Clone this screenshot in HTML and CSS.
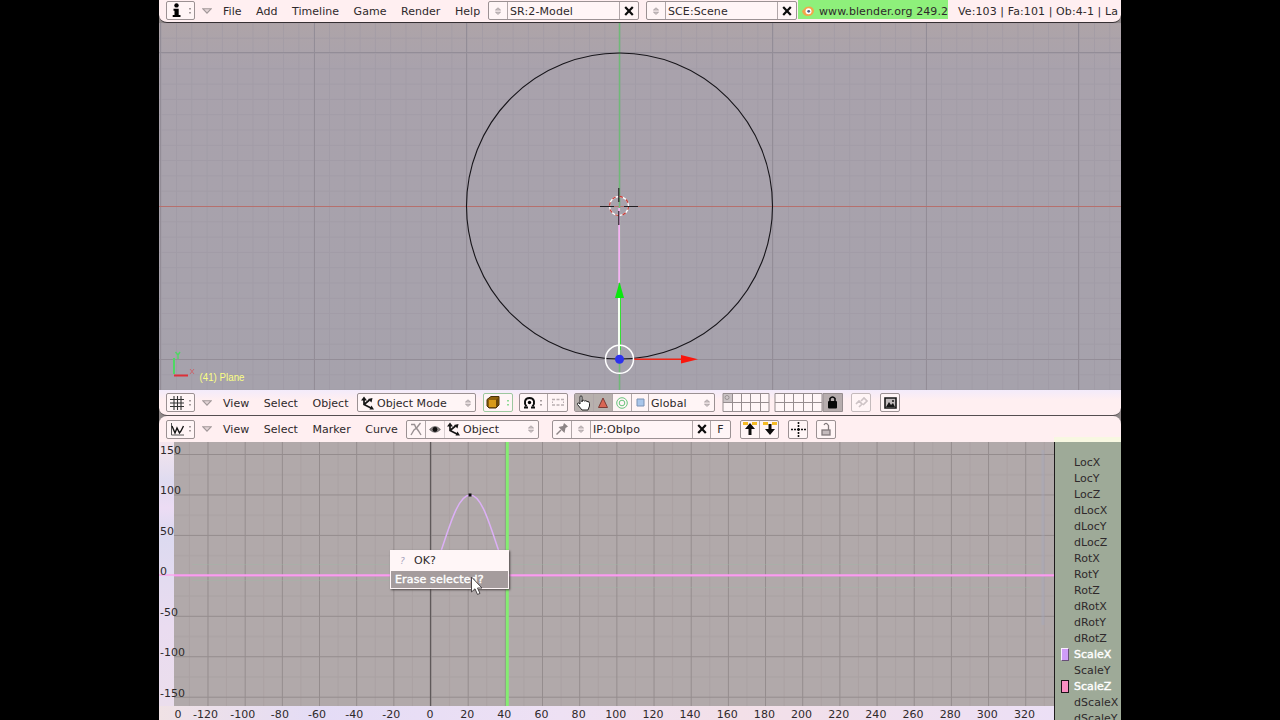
FILE: index.html
```html
<!DOCTYPE html>
<html lang="en">
<head>
    <meta charset="UTF-8">
    <title>Blender</title>
    <link rel="stylesheet" href="styles.css">
</head>
<body>

<svg class="defs" width="0" height="0">
    <symbol id="updown" viewBox="0 0 8 8"><path d="M1.500 3L4 .8L6.500 3ZM1.500 5.200L4 7.400L6.500 5.200Z" fill="#d8cfd1" stroke="#a1989a" stroke-width=".8"/></symbol>
    <symbol id="tri" viewBox="0 0 10 6"><path d="M.8 .7H9.2L5 5.2Z" fill="#e3d4d6" stroke="#a3999b" stroke-width="1.1"/></symbol>
    <symbol id="axes" viewBox="0 0 14 14"><path d="M3 3V8.500L10 12M3 8.500L8.500 4" fill="none" stroke="#151515" stroke-width="1.700"/><path d="M3 .5L6 4.500H0ZM11.500 2L10.500 6.500L7 3ZM13 13.500L8.500 13.500L10.500 9.500Z" fill="#151515"/></symbol>
    <symbol id="cross" viewBox="0 0 10 10"><path d="M1.2 1L8.800 9M8.800 1L1.200 9" stroke="#0c0c0c" stroke-width="2.200"/></symbol>
</svg>

<div class="window">

    <header class="bar top">
        <button class="box type"><svg width="10" height="15" viewBox="0 0 10 15"><circle cx="4.500" cy="2.400" r="2.200"/><path d="M1.500 5.700H6.700V12H8.500V14H.7V12H2.500V7.700H1.500Z"/></svg><svg class="ud" width="5" height="8"><path d="M1 1h2v1.500h-2zM1 5h2v1.500h-2z" fill="#a59c9d"/></svg></button>
        <svg class="tri" width="10" height="6"><use href="#tri"/></svg>
        <nav class="menu main-menu">
            <span>File</span><span>Add</span><span>Timeline</span><span>Game</span><span>Render</span><span>Help</span>
        </nav>
        <div class="box field">
            <span class="cell"><svg width="8" height="8"><use href="#updown"/></svg></span>
            <span class="value">SR:2-Model</span>
            <span class="cell"><svg width="10" height="10"><use href="#cross"/></svg></span>
        </div>
        <div class="box field scene">
            <span class="cell"><svg width="8" height="8"><use href="#updown"/></svg></span>
            <span class="value">SCE:Scene</span>
            <span class="cell"><svg width="10" height="10"><use href="#cross"/></svg></span>
        </div>
        <div class="version">
            <svg width="14" height="12" viewBox="0 0 14 12"><path d="M1 6L5 2Q12 0 13 6Q12 11 7 11Q2 11 1 6Z" fill="#f2a64a"/><circle cx="7.500" cy="6.300" r="3" fill="#fff"/><circle cx="7.700" cy="6.300" r="1.400" fill="#4a5c86"/></svg>
            <span>www.blender.org 249.2</span>
        </div>
        <div class="stats">Ve:103 | Fa:101 | Ob:4-1 | La</div>
    </header>

    <!-- 3D view -->
    <svg class="view" width="962" height="367" viewBox="159 23 962 367">
        <defs>
            <pattern id="minor" x="160.700" y="53" width="15.300" height="15.300" patternUnits="userSpaceOnUse">
                <path d="M0 .5H15.300M.5 0V15.300" stroke="#9c96a1" stroke-width="1" fill="none" opacity=".5"/>
            </pattern>
            <linearGradient id="haze" x1="0" y1="0" x2="0" y2="1">
                <stop offset="0" stop-color="#aea4a8"/>
                <stop offset=".12" stop-color="#a9a2ac"/>
                <stop offset="1" stop-color="#a6a2ac"/>
            </linearGradient>
        </defs>
        <rect x="159" y="23" width="962" height="367" fill="url(#haze)"/>
        <rect x="159" y="23" width="962" height="367" fill="url(#minor)"/>
        <path d="M160.500 23V390M314.500 23V390M466.500 23V390M772.500 23V390M926.500 23V390M1078.500 23V390M159 52.500H1121M159 359.500H1121" stroke="#938d97" fill="none"/>
        <path d="M159 206.500H1121" stroke="#b6706d"/>
        <path d="M619.500 23V390" stroke="#70b878" stroke-width="1.500"/>
        <circle cx="619.500" cy="206" r="153" fill="none" stroke="#17151a" stroke-width="1.100"/>
        <path d="M619.200 208V283" stroke="#f6b4f4" stroke-width="2"/>
        <path d="M619 298V358" stroke="#f5fff2" stroke-width="2"/>
        <path d="M620.500 298V350" stroke="#35df35"/>
        <path d="M619.500 282L624 298H615Z" fill="#0be80e"/>
        <circle cx="619" cy="206" r="9.500" fill="none" stroke="#fff" stroke-width="1.300"/>
        <circle cx="619" cy="206" r="9.500" fill="none" stroke="#c63f3b" stroke-width="1.300" stroke-dasharray="3.730"/>
        <path d="M600 206.500H614M624 206.500H638M618.800 188V202M618.800 211V225" stroke="#241f22" stroke-width="1.200"/>
        <path d="M634 359.200H682" stroke="#ee2516" stroke-width="1.500"/>
        <path d="M681 355L698 359.300L681 363.500Z" fill="#fa160c"/>
        <circle cx="619.500" cy="359.300" r="14" fill="none" stroke="#fff" stroke-width="1.500"/>
        <circle cx="619.500" cy="359.300" r="4.500" fill="#2d31ed"/>
        <path d="M174 374V358" stroke="#4ed862" stroke-width="2"/>
        <path d="M175.500 352l2.500 3l2 -3M178 355v4" stroke="#4ed862" stroke-width="1.400" fill="none"/>
        <path d="M174 375.500H188" stroke="#dd3038" stroke-width="2"/>
        <path d="M190 369l4 5M194 369l-4 5" stroke="#c96870"/>
        <text x="199.500" y="381" class="object-name" textLength="45" lengthAdjust="spacingAndGlyphs">(41) Plane</text>
    </svg>

    <header class="bar mid">
        <button class="box type"><svg width="14" height="14"><path d="M4 0V14M7.500 0V14M11 0V14M0 3.500H14M0 7H14M0 10.500H14" stroke="#333" stroke-width="1.100"/></svg><svg class="ud" width="5" height="8"><path d="M1 1h2v1.500h-2zM1 5h2v1.500h-2z" fill="#a59c9d"/></svg></button>
        <svg class="tri" width="10" height="6"><use href="#tri"/></svg>
        <nav class="menu view-menu"><span>View</span><span>Select</span><span>Object</span></nav>
        <div class="box drop mode"><svg width="14" height="14"><use href="#axes"/></svg><span>Object Mode</span><svg class="end" width="8" height="8"><use href="#updown"/></svg></div>
        <div class="box draw">
            <svg width="15" height="15" viewBox="0 0 15 15"><path d="M1 4.500L5 1.500H13V10L10 13H3L1 11Z" fill="#8f610c" stroke="#49310a"/><path d="M3 5H10V12H3Z" fill="#d99a19"/><path d="M10 5L13 2V10L10 12Z" fill="#6c4707"/></svg>
            <svg width="5" height="8"><path d="M1 1h2v1.500h-2zM1 5h2v1.500h-2z" fill="#8edb94"/></svg>
        </div>
        <div class="box pivot">
            <span class="cell grow"><svg width="13" height="13" viewBox="0 0 13 13"><path d="M3.500 10.500C.8 7.500 1.300 2 6.500 2S12.200 7.500 9.500 10.500" fill="none" stroke="#0e0e0e" stroke-width="2"/><path d="M1 11.500H5M8 11.500H12" stroke="#0e0e0e" stroke-width="1.800"/><circle cx="6.500" cy="6.500" r="1.700"/></svg><svg width="5" height="8"><path d="M1 1h2v1.500h-2zM1 5h2v1.500h-2z" fill="#a59c9d"/></svg></span>
            <span class="cell"><svg width="14" height="9"><path d="M1 1.500h3M5.500 1.500h3M10 1.500h3M1 7h3M5.500 7h3M10 7h3M1 4.200h1M12 4.200h1" stroke="#b9aeb1" stroke-width="1.500"/></svg></span>
        </div>
        <div class="box manip">
            <span class="cell on"><svg width="16" height="16" viewBox="0 0 16 16"><path d="M4 9V2Q4 .8 5 .8T6 2V7V5.500Q7.500 4.700 8.500 6Q10 5.200 11 6.500Q13.500 6 13.500 8.500V11L12 15H6L1.500 9.500Q1 8 2.500 8Z" fill="#fff" stroke="#222"/></svg></span>
            <span class="cell on"><svg width="12" height="12"><path d="M6 1L10.500 10.500H1.500Z" fill="#d96654" stroke="#7d3a34"/></svg></span>
            <span class="cell"><svg width="14" height="14"><circle cx="7" cy="7" r="5.300" fill="none" stroke="#69c47c"/><circle cx="7" cy="7" r="2.800" fill="none" stroke="#69c47c"/></svg></span>
            <span class="cell narrow"><svg width="9" height="9"><path d="M1 1H8V8H1Z" fill="#a9c6ea" stroke="#7b92b5"/></svg></span>
            <span class="value">Global</span><svg class="end" width="8" height="8"><use href="#updown"/></svg>
        </div>
        <svg class="layers" width="121" height="20" viewBox="0 0 121 20">
            <rect x="1" y=".5" width="46" height="18" rx="1.500" fill="#fff6f7"/><rect x="53" y=".5" width="47" height="18" rx="1.500" fill="#fff6f7"/>
            <rect x="1" y=".5" width="9" height="9" fill="#cbc4c6"/><rect x="101" y=".5" width="19" height="18" fill="#b7adae"/>
            <path d="M1 .5H47V18.500H1ZM1 9.500H47M10.500 .5V18.500M19.500 .5V18.500M28.500 .5V18.500M38.500 .5V18.500M53 .5H100V18.500H53ZM53 9.500H100M62.500 .5V18.500M71.500 .5V18.500M81.500 .5V18.500M90.500 .5V18.500M101 .5H120.500V18.500H101Z" fill="none" stroke="#968d8f"/>
            <circle cx="5" cy="4.500" r="2" fill="#cfc8ca" stroke="#8d8688" stroke-width=".8"/>
            <rect x="106" y="8" width="9" height="7.500" rx="1" fill="#080808"/><path d="M108 8.500V5.500Q110.500 2.500 113 5.500V8.500" fill="none" stroke="#080808" stroke-width="1.600"/>
        </svg>
        <div class="box single link"><svg width="15" height="14"><path d="M2 8L5 5L8 8L5 11M7 5L10 2L13 5L9 9" fill="none" stroke="#cdc3c5" stroke-width="1.700"/></svg></div>
        <div class="box single render"><svg width="13" height="12"><path d="M1 1H12V11H1Z" fill="#c2bcbd" stroke="#171717" stroke-width="1.600"/><path d="M2 10L5 5L7 8L9 6L11 10Z" fill="#171717"/><circle cx="9" cy="4" r="1" fill="#171717"/></svg></div>
    </header>

    <header class="bar low">
        <button class="box type"><svg width="15" height="13"><path d="M1.500 0V12H14" stroke="#555" fill="none"/><path d="M2 3L5 10L7 5L9.500 10L11 8L13.500 3" fill="none" stroke="#151515" stroke-width="1.400"/></svg><svg class="ud" width="5" height="8"><path d="M1 1h2v1.500h-2zM1 5h2v1.500h-2z" fill="#a59c9d"/></svg></button>
        <svg class="tri" width="10" height="6"><use href="#tri"/></svg>
        <nav class="menu curve-menu"><span>View</span><span>Select</span><span>Marker</span><span>Curve</span></nav>
        <div class="box ipo">
            <span class="cell"><svg width="14" height="14"><path d="M2 13L5 8L7.500 6L9.500 9L12 13M7.500 6L11.500 1M2 2.500H5.500L7 6" fill="none" stroke="#989092" stroke-width="1.400"/></svg></span>
            <span class="cell plain"><svg width="12" height="9" viewBox="0 0 13 10"><path d="M.5 5Q6.500 -1.500 12.500 5Q6.500 11 .5 5Z" fill="#8d8586" stroke="#666"/><circle cx="6.500" cy="5" r="2.700" fill="#111"/></svg></span>
            <span class="drop"><svg width="14" height="14"><use href="#axes"/></svg><span>Object</span><svg class="end" width="8" height="8"><use href="#updown"/></svg></span>
        </div>
        <div class="box block">
            <span class="cell"><svg width="14" height="14"><path d="M1.500 12.500L6 8" stroke="#8d8586" stroke-width="1.400"/><path d="M3.500 5L8 4L9 1L13 4.500L10.500 6L9.500 11Z" fill="#8d8586"/></svg></span>
            <span class="cell"><svg width="8" height="8"><use href="#updown"/></svg></span>
            <span class="value">IP:ObIpo</span>
            <span class="cell"><svg width="10" height="10"><use href="#cross"/></svg></span>
            <span class="cell">F</span>
        </div>
        <div class="box copy">
            <span class="cell"><svg width="16" height="16"><path d="M1 1H6V4H1ZM10 1H15V4H10Z" fill="#f4bc25"/><path d="M8 2L13 8H9.500V14H6.500V8H3Z" fill="#0d0d0d"/></svg></span>
            <span class="cell"><svg width="16" height="16"><path d="M1 1H6V4H1ZM10 1H15V4H10Z" fill="#f4bc25"/><path d="M8 14L13 8H9.500V3H6.500V8H3Z" fill="#0d0d0d"/></svg></span>
        </div>
        <div class="box single home"><svg width="15" height="15"><path d="M7.500 0V15M0 7.500H15" stroke="#111" stroke-width="1.600" stroke-dasharray="2 1 2 1 3 1 2 1"/></svg></div>
        <div class="box single"><svg width="12" height="14"><rect x="2" y="8" width="8" height="5" fill="#c4bbbd" stroke="#81797b" stroke-width="1.300"/><path d="M8.500 8V3.500Q6 -.5 4 3" fill="none" stroke="#81797b" stroke-width="1.300"/></svg></div>
    </header>

    <!-- Ipo curve editor -->
    <main class="curves">
        <div class="y-axis">
            <span>150</span><span>100</span><span>50</span><span>0</span><span>-50</span><span>-100</span><span>-150</span>
        </div>
        <svg class="plot" width="880" height="264" viewBox="174 442 880 264">
            <defs>
                <pattern id="grid" x="207.500" y="454" width="37.170" height="40.450" patternUnits="userSpaceOnUse">
                    <path d="M19 0V40.450M0 20.700H37.170" stroke="#a79fa0" fill="none" opacity=".8"/>
                    <path d="M.5 0V40.450M0 .5H37.170" stroke="#948c8d" fill="none"/>
                </pattern>
            </defs>
            <rect x="174" y="442" width="880" height="264" fill="#b1a9aa"/>
            <rect x="174" y="442" width="880" height="264" fill="url(#grid)"/>
            <path d="M192 564.500H500M510 564.500H1040M192 580.500H390M510 587.500H1030" stroke="#9cbba5" opacity=".35"/>
            <path d="M1043 450V625" stroke="#a4a9c3" stroke-width="3" opacity=".35"/>
            <path d="M430.500 442V706" stroke="#5f595a" stroke-width="1.200"/>
            <path d="M174 575.300H1054" stroke="#fb9bf0" stroke-width="2.200"/>
            <path d="M437 563C448 532 457 495 470 495S491 530 503 563" fill="none" stroke="#dcb0f6" stroke-width="1.500"/>
            <rect x="468.500" y="493.500" width="3" height="3" fill="#080808"/>
            <path d="M507.300 442V706" stroke="#85ec72" stroke-width="3"/>
        </svg>
        <div class="x-axis">
            <span class="cut">0</span><span>-120</span><span>-100</span><span>-80</span><span>-60</span><span>-40</span><span>-20</span><span class="pos">0</span><span>20</span><span>40</span><span>60</span><span>80</span><span>100</span><span>120</span><span>140</span><span>160</span><span>180</span><span>200</span><span>220</span><span>240</span><span>260</span><span>280</span><span>300</span><span>320</span>
        </div>
        <ul class="channels">
            <li>LocX</li>
            <li>LocY</li>
            <li>LocZ</li>
            <li>dLocX</li>
            <li>dLocY</li>
            <li>dLocZ</li>
            <li>RotX</li>
            <li>RotY</li>
            <li>RotZ</li>
            <li>dRotX</li>
            <li>dRotY</li>
            <li>dRotZ</li>
            <li class="selected"><i class="swatch violet"></i>ScaleX</li>
            <li>ScaleY</li>
            <li class="selected"><i class="swatch pink"></i>ScaleZ</li>
            <li>dScaleX</li>
            <li>dScaleY</li>
        </ul>
    </main>
</div>

<div class="popup">
    <div class="popup-title"><i>?</i>OK?</div>
    <div class="popup-item">Erase selected?</div>
</div>
<svg class="pointer" width="13" height="20" viewBox="0 0 13 20"><path d="M1.500 1V16L5 12.800L7.500 18.500L10 17.400L7.500 12H12Z" fill="#fff" stroke="#4c4648"/></svg>

</body>
</html>
```
FILE: styles.css
```css
* {
    box-sizing: border-box;
    margin: 0;
    padding: 0;
}
body {
    background: #000;
    height: 720px;
    overflow: hidden;
    font-family: "DejaVu Sans", sans-serif;
    font-size: 11px;
    letter-spacing: .04px;
    color: #2e292b;
}
svg {
    display: block;
    flex: none;
}
.defs {
    position: absolute;
}
.window {
    width: 962px;
    height: 720px;
    margin: 0 auto;
    overflow: hidden;
    background: #8f8889;
}
.bar {
    display: flex;
    align-items: center;
    background: #ffeff1;
    padding-left: 7px;
    white-space: nowrap;
    overflow: hidden;
}
.top {
    height: 23px;
    padding-bottom: 1px;
    border-bottom: 1px solid #352f32;
    border-radius: 0 0 8px 8px;
}
.mid {
    height: 26px;
    border-bottom: 1px solid #554e50;
    border-radius: 0 0 8px 8px;
    background: linear-gradient(#f3ebfb, #ffeff1 40%);
}
.low {
    height: 26px;
    border-radius: 8px 8px 0 0;
    background: linear-gradient(#f8f8e2, #f8f8e2) right bottom / 67px 5px no-repeat #ffeff1;
}
.box {
    display: flex;
    align-items: center;
    height: 19px;
    border: 1px solid #9b9193;
    border-radius: 2px;
    background: #fff5f6;
    flex: none;
}
.type {
    width: 29px;
    justify-content: space-between;
    padding: 0 1px 0 3px;
}
.top .type {
    padding-left: 5px;
}
.tri {
    margin-left: 7px;
}
.menu {
    display: flex;
    flex: none;
    gap: 14.5px;
    margin-left: 11px;
    padding-top: 1px;
}
.main-menu {
    width: 265px;
}
.view-menu {
    width: 134px;
}
.curve-menu {
    width: 183px;
}
.cell {
    width: 19px;
    height: 100%;
    display: flex;
    flex: none;
    align-items: center;
    justify-content: center;
    border-right: 1px solid #b0a6a8;
}
.cell:last-child {
    border-right: none;
}
.plain {
    border-right-color: #d8ced0;
}
.narrow {
    width: 17px;
}
.value {
    flex: 1;
    padding: 1px 0 0 2px;
    letter-spacing: .1px;
}
.value + .cell {
    border-left: 1px solid #b0a6a8;
}
.field {
    width: 151px;
}
.scene {
    margin-left: 7px;
}
.version {
    display: flex;
    align-items: center;
    align-self: flex-start;
    width: 150px;
    height: 19px;
    margin-left: 1px;
    padding: 3px 0 0 3px;
    gap: 4px;
    background: #8ef07b;
    letter-spacing: .1px;
    flex: none;
}
.stats {
    margin-left: 10px;
    padding-top: 1px;
    letter-spacing: .1px;
}
.object-name {
    font-family: "Liberation Sans", sans-serif;
    font-size: 11px;
    fill: #fbff84;
}
.drop {
    display: flex;
    align-items: center;
    flex: 1;
    padding-left: 3px;
    gap: 2px;
}
.drop span {
    padding-top: 1px;
}
.ipo .drop {
    padding-left: 2px;
}
.end {
    margin: 0 3px 0 auto;
}
.mode {
    flex: none;
    width: 119px;
}
.draw {
    width: 30px;
    margin-left: 7px;
    padding-left: 2px;
    gap: 5px;
    border-color: #9dc79f;
}
.pivot {
    width: 49px;
    margin-left: 6px;
}
.grow {
    width: 28px;
    gap: 3px;
}
.manip {
    width: 141px;
    margin-left: 6px;
}
.on {
    background: #b7b0ad;
}
.layers {
    margin-left: 7px;
}
.single {
    width: 20px;
    justify-content: center;
}
.link {
    margin-left: 8px;
    border-color: #c4babc;
}
.render {
    margin-left: 9px;
}
.ipo {
    width: 133px;
}
.block {
    width: 179px;
    margin-left: 13px;
}
.copy {
    width: 39px;
    margin-left: 9px;
}
.home {
    margin: 0 8px 0 9px;
}
.curves {
    display: grid;
    grid-template-columns: 15px 880px 67px;
    grid-template-rows: 264px 14px;
    height: 278px;
}
.y-axis {
    display: flex;
    flex-direction: column;
    background: linear-gradient(#f5b5ee, #f5b5ee) 0 132px / 100% 2px no-repeat,
        linear-gradient(#f5e5ed, #dfdbf0 15%, #ecdcf4 25%, #dcdaf0 35%, #eadcf0 70%, #ebdeed);
    padding-left: 1px;
    white-space: nowrap;
    position: relative;
}
.y-axis span {
    height: 40.45px;
    line-height: 40.45px;
    width: 0;
    flex: none;
}
.y-axis span:first-child {
    margin-top: -11px;
}
.x-axis {
    grid-column: 1 / 3;
    grid-row: 2;
    display: flex;
    background: linear-gradient(90deg, #f0e2e5, #e4dcf6 18%, #eee1f4 45%, #f3e0e8 65%, #ece0f6);
    overflow: hidden;
    line-height: 17px;
}
.x-axis span {
    width: 37.17px;
    flex: none;
    text-align: center;
}
.x-axis .cut {
    width: 28px;
    padding-left: 10px;
}
.x-axis .pos, .x-axis .pos ~ span {
    padding-left: 3px;
}
.channels {
    grid-column: 3;
    grid-row: 1 / 3;
    list-style: none;
    background: #9eaa98;
    border-left: 1px solid #1e1b1c;
    padding-top: 12px;
    overflow: hidden;
    white-space: nowrap;
}
.channels li {
    height: 16px;
    line-height: 17px;
    padding-left: 19px;
}
.channels .selected {
    display: flex;
    align-items: center;
    padding-left: 6px;
    gap: 5px;
    color: #fff;
    -webkit-text-stroke: .4px #fff;
}
.swatch {
    width: 8px;
    height: 13px;
    border: 1px solid #faf0ff;
    border-right-color: #685078;
    border-bottom-color: #685078;
}
.violet {
    background: #cf9cf8;
}
.pink {
    background: #fa8fc3;
    border: 1px solid #1b1116;
}
.popup {
    position: absolute;
    left: 390px;
    top: 550px;
    width: 119px;
    height: 39px;
    background: #fff6f7;
    padding: 0 1px 1px;
    box-shadow: 1px 1px 2px #4b4546;
}
.popup-title {
    height: 21px;
    line-height: 21px;
}
.popup-title i {
    display: inline-block;
    width: 23px;
    padding-left: 9px;
    font-size: 9px;
    color: #aaa5c0;
}
.popup-item {
    height: 17px;
    line-height: 18px;
    padding-left: 4px;
    background: #a59c9d;
    color: #fff;
    letter-spacing: .15px;
    -webkit-text-stroke: .4px #fff;
}
.pointer {
    position: absolute;
    left: 470px;
    top: 576px;
}
```
